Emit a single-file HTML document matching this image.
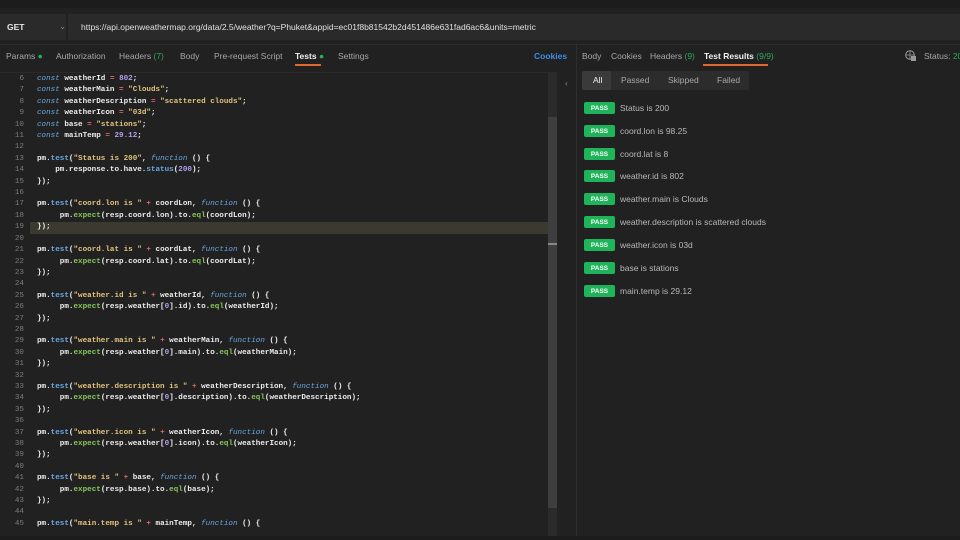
<!DOCTYPE html>
<html><head><meta charset="utf-8"><style>
*{margin:0;padding:0;box-sizing:border-box}
body{width:960px;height:540px;background:#212121;overflow:hidden;position:relative;font-family:"Liberation Sans",sans-serif;color:#a8a8a8}
.abs{position:absolute}
.ui{font-size:8.5px;white-space:nowrap}
.code{position:absolute;left:0;top:74px;font-family:"Liberation Mono",monospace;font-size:7.6px;line-height:11.41px;white-space:pre;color:#ececec;font-weight:bold}
.ln{display:inline-block;width:24px;text-align:right;color:#7d7d7d;margin-right:13px;font-weight:normal}
.k{color:#6aa8e0;font-style:italic;font-weight:normal}
.s{color:#e0c27c}
.n{color:#b69cf0}
.o{color:#e06a6a}
.f{color:#6aa8e0}
.g{color:#86c45a}
.badge{position:absolute;left:584px;width:31px;height:12px;background:#1fb35a;border-radius:2px;color:#fff;font-size:6.5px;font-weight:bold;display:flex;align-items:center;justify-content:center}
.res{position:absolute;left:620px;font-size:8.5px;color:#b8b8b8;line-height:12px}
</style></head><body>
<div class="abs" style="left:0;top:0;width:960px;height:8px;background:#1c1c1c"></div>
<div class="abs" style="left:0;top:14px;width:960px;height:26px;background:#2a2a2a"></div>
<div class="abs" style="left:66px;top:14px;width:2px;height:26px;background:#212121"></div>
<div class="abs ui" style="left:7px;top:22px;color:#e8e8e8;font-weight:bold">GET</div>
<div class="abs ui" style="left:59px;top:21px;color:#888">⌄</div>
<div class="abs ui" style="left:81px;top:22px;color:#e0e0e0">https://api.openweathermap.org/data/2.5/weather?q=Phuket&amp;appid=ec01f8b81542b2d451486e631fad6ac6&amp;units=metric</div>
<div class="abs" style="left:0;top:44px;width:960px;height:1px;background:#2c2c2c"></div>
<div class="abs ui" style="left:6px;top:51px">Params <span style="color:#1fb35a">●</span></div>
<div class="abs ui" style="left:56px;top:51px">Authorization</div>
<div class="abs ui" style="left:119px;top:51px">Headers <span style="color:#2aa860">(7)</span></div>
<div class="abs ui" style="left:180px;top:51px">Body</div>
<div class="abs ui" style="left:214px;top:51px">Pre-request Script</div>
<div class="abs ui" style="left:295px;top:51px;color:#f0f0f0;font-weight:bold">Tests <span style="color:#1fb35a">●</span></div>
<div class="abs" style="left:295px;top:64px;width:26px;height:2px;background:#e0672e"></div>
<div class="abs ui" style="left:338px;top:51px">Settings</div>
<div class="abs ui" style="left:534px;top:51px;color:#3b8fe8;font-weight:bold">Cookies</div>
<div class="abs" style="left:576px;top:44px;width:1px;height:496px;background:#2e2e2e"></div>
<div class="abs" style="left:0;top:72px;width:557px;height:1px;background:#2a2a2a"></div>
<div class="abs ui" style="left:565px;top:78px;color:#888">‹</div>
<div class="abs" style="left:30px;top:222px;width:518px;height:12px;background:#3a3a30"></div>
<div class="abs" style="left:548px;top:72px;width:9px;height:464px;background:#2b2b2b"></div>
<div class="abs" style="left:548px;top:117px;width:9px;height:391px;background:#3e3e3e"></div>
<div class="abs" style="left:548px;top:243px;width:9px;height:2px;background:#888"></div>
<div class="code"><span class="ln">6</span><span class="k">const</span> weatherId <span class="o">=</span> <span class="n">802</span>;
<span class="ln">7</span><span class="k">const</span> weatherMain <span class="o">=</span> <span class="s">"Clouds"</span>;
<span class="ln">8</span><span class="k">const</span> weatherDescription <span class="o">=</span> <span class="s">"scattered clouds"</span>;
<span class="ln">9</span><span class="k">const</span> weatherIcon <span class="o">=</span> <span class="s">"03d"</span>;
<span class="ln">10</span><span class="k">const</span> base <span class="o">=</span> <span class="s">"stations"</span>;
<span class="ln">11</span><span class="k">const</span> mainTemp <span class="o">=</span> <span class="n">29.12</span>;
<span class="ln">12</span>
<span class="ln">13</span>pm.<span class="f">test</span>(<span class="s">"Status is 200"</span>, <span class="k">function</span> () {
<span class="ln">14</span>    pm.response.to.have.<span class="f">status</span>(<span class="n">200</span>);
<span class="ln">15</span>});
<span class="ln">16</span>
<span class="ln">17</span>pm.<span class="f">test</span>(<span class="s">"coord.lon is "</span> <span class="o">+</span> coordLon, <span class="k">function</span> () {
<span class="ln">18</span>     pm.<span class="g">expect</span>(resp.coord.lon).to.<span class="g">eql</span>(coordLon);
<span class="ln">19</span>});
<span class="ln">20</span>
<span class="ln">21</span>pm.<span class="f">test</span>(<span class="s">"coord.lat is "</span> <span class="o">+</span> coordLat, <span class="k">function</span> () {
<span class="ln">22</span>     pm.<span class="g">expect</span>(resp.coord.lat).to.<span class="g">eql</span>(coordLat);
<span class="ln">23</span>});
<span class="ln">24</span>
<span class="ln">25</span>pm.<span class="f">test</span>(<span class="s">"weather.id is "</span> <span class="o">+</span> weatherId, <span class="k">function</span> () {
<span class="ln">26</span>     pm.<span class="g">expect</span>(resp.weather[<span class="n">0</span>].id).to.<span class="g">eql</span>(weatherId);
<span class="ln">27</span>});
<span class="ln">28</span>
<span class="ln">29</span>pm.<span class="f">test</span>(<span class="s">"weather.main is "</span> <span class="o">+</span> weatherMain, <span class="k">function</span> () {
<span class="ln">30</span>     pm.<span class="g">expect</span>(resp.weather[<span class="n">0</span>].main).to.<span class="g">eql</span>(weatherMain);
<span class="ln">31</span>});
<span class="ln">32</span>
<span class="ln">33</span>pm.<span class="f">test</span>(<span class="s">"weather.description is "</span> <span class="o">+</span> weatherDescription, <span class="k">function</span> () {
<span class="ln">34</span>     pm.<span class="g">expect</span>(resp.weather[<span class="n">0</span>].description).to.<span class="g">eql</span>(weatherDescription);
<span class="ln">35</span>});
<span class="ln">36</span>
<span class="ln">37</span>pm.<span class="f">test</span>(<span class="s">"weather.icon is "</span> <span class="o">+</span> weatherIcon, <span class="k">function</span> () {
<span class="ln">38</span>     pm.<span class="g">expect</span>(resp.weather[<span class="n">0</span>].icon).to.<span class="g">eql</span>(weatherIcon);
<span class="ln">39</span>});
<span class="ln">40</span>
<span class="ln">41</span>pm.<span class="f">test</span>(<span class="s">"base is "</span> <span class="o">+</span> base, <span class="k">function</span> () {
<span class="ln">42</span>     pm.<span class="g">expect</span>(resp.base).to.<span class="g">eql</span>(base);
<span class="ln">43</span>});
<span class="ln">44</span>
<span class="ln">45</span>pm.<span class="f">test</span>(<span class="s">"main.temp is "</span> <span class="o">+</span> mainTemp, <span class="k">function</span> () {</div>
<div class="abs" style="left:0;top:536px;width:960px;height:4px;background:#1c1c1c"></div>

<div class="abs ui" style="left:582px;top:51px">Body</div>
<div class="abs ui" style="left:611px;top:51px">Cookies</div>
<div class="abs ui" style="left:650px;top:51px">Headers <span style="color:#2aa860">(9)</span></div>
<div class="abs ui" style="left:704px;top:51px;color:#f0f0f0;font-weight:bold">Test Results <span style="color:#2aa860;font-weight:normal">(9/9)</span></div>
<div class="abs" style="left:703px;top:64px;width:65px;height:2px;background:#e0672e"></div>
<svg class="abs" style="left:905px;top:50px" width="11" height="11" viewBox="0 0 11 11"><circle cx="5" cy="5" r="4.3" fill="none" stroke="#999" stroke-width="1"/><path d="M1 5h8M5 1v8" stroke="#999" stroke-width=".8"/><rect x="6" y="6" width="5" height="5" fill="#999"/></svg>
<div class="abs ui" style="left:924px;top:51px">Status: <span style="color:#2aa860">200</span></div>
<div class="abs" style="left:582px;top:71px;width:167px;height:19px;background:#2c2c2c;border-radius:2px"></div>
<div class="abs" style="left:582px;top:71px;width:29px;height:19px;background:#3a3a3a;border-radius:2px 0 0 2px"></div>
<div class="abs ui" style="left:593px;top:75px;color:#f0f0f0">All</div>
<div class="abs ui" style="left:621px;top:75px">Passed</div>
<div class="abs ui" style="left:668px;top:75px">Skipped</div>
<div class="abs ui" style="left:717px;top:75px">Failed</div>

<div class="badge" style="top:102px">PASS</div><div class="res" style="top:102px">Status is 200</div>
<div class="badge" style="top:125px">PASS</div><div class="res" style="top:125px">coord.lon is 98.25</div>
<div class="badge" style="top:148px">PASS</div><div class="res" style="top:148px">coord.lat is 8</div>
<div class="badge" style="top:170px">PASS</div><div class="res" style="top:170px">weather.id is 802</div>
<div class="badge" style="top:193px">PASS</div><div class="res" style="top:193px">weather.main is Clouds</div>
<div class="badge" style="top:216px">PASS</div><div class="res" style="top:216px">weather.description is scattered clouds</div>
<div class="badge" style="top:239px">PASS</div><div class="res" style="top:239px">weather.icon is 03d</div>
<div class="badge" style="top:262px">PASS</div><div class="res" style="top:262px">base is stations</div>
<div class="badge" style="top:285px">PASS</div><div class="res" style="top:285px">main.temp is 29.12</div>
</body></html>
